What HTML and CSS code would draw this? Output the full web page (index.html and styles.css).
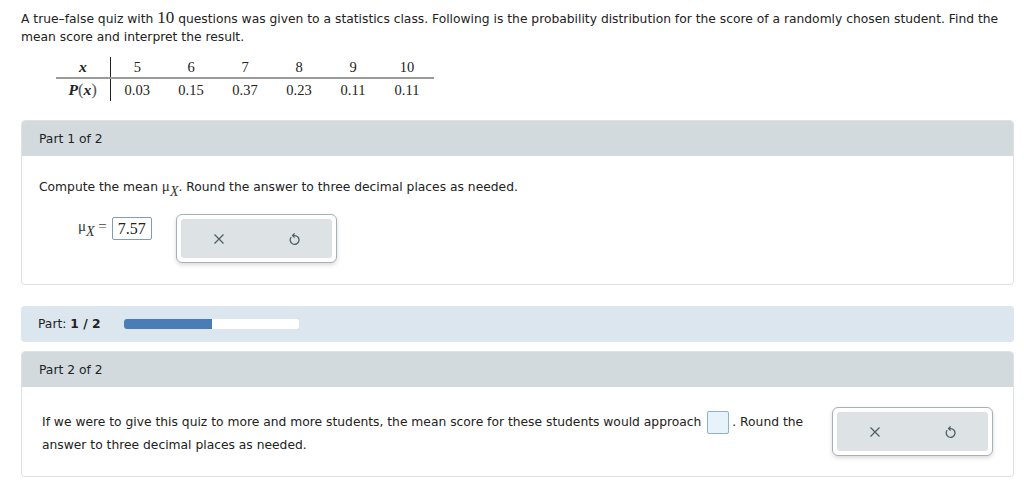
FILE: index.html
```html
<!DOCTYPE html>
<html>
<head>
<meta charset="utf-8">
<link rel="stylesheet" href="styles.css">
</head>
<body>
<div class="page">
  <p class="intro">A true–false quiz with <span class="num">10</span> questions was given to a statistics class. Following is the probability distribution for the score of a randomly chosen student. Find the mean score and interpret the result.</p>

  <table class="dist">
    <tr class="r1">
      <th class="lbl"><i>x</i></th>
      <td>5</td><td>6</td><td>7</td><td>8</td><td>9</td><td>10</td>
    </tr>
    <tr class="r2">
      <th class="lbl"><i>P</i><span class="paren">(</span><i>x</i><span class="paren">)</span></th>
      <td>0.03</td><td>0.15</td><td>0.37</td><td>0.23</td><td>0.11</td><td>0.11</td>
    </tr>
  </table>

  <section class="panel">
    <div class="panel-head">Part 1 of 2</div>
    <div class="panel-body body1">
      <p class="prompt">Compute the mean <span class="mu">μ<sub>X</sub></span>. Round the answer to three decimal places as needed.</p>
      <div class="answer-row">
        <span class="math"><span class="mu">μ<sub>X</sub></span> = </span>
        <span class="input filled">7.57</span>
        <div class="btn-group">
          <div class="btn-inner">
            <span class="icon"><svg width="12" height="12" viewBox="0 0 12 12"><path d="M1.5 1.5 L10.5 10.5 M10.5 1.5 L1.5 10.5" stroke="#4f5f69" stroke-width="1.3" fill="none"/></svg></span>
            <span class="icon"><svg width="12" height="14" viewBox="0 0 12 14"><path d="M3.2 5.2 A4.4 4.4 0 1 0 6.2 3.6 H4.8" stroke="#4f5f69" stroke-width="1.3" fill="none"/><path d="M6.6 1.4 L4.6 3.6 L6.6 5.6" stroke="#4f5f69" stroke-width="1.3" fill="none"/></svg></span>
          </div>
        </div>
      </div>
    </div>
  </section>

  <div class="progress">
    <span class="plabel">Part: <b>1 / 2</b></span>
    <div class="bar"><div class="fill" style="width:50%"></div></div>
  </div>

  <section class="panel">
    <div class="panel-head">Part 2 of 2</div>
    <div class="panel-body body2">
      <p class="prompt2">If we were to give this quiz to more and more students, the mean score for these students would approach <span class="input empty"></span>. Round the answer to three decimal places as needed.</p>
      <div class="btn-group">
        <div class="btn-inner">
          <span class="icon"><svg width="12" height="12" viewBox="0 0 12 12"><path d="M1.5 1.5 L10.5 10.5 M10.5 1.5 L1.5 10.5" stroke="#4f5f69" stroke-width="1.3" fill="none"/></svg></span>
          <span class="icon"><svg width="12" height="14" viewBox="0 0 12 14"><path d="M3.2 5.2 A4.4 4.4 0 1 0 6.2 3.6 H4.8" stroke="#4f5f69" stroke-width="1.3" fill="none"/><path d="M6.6 1.4 L4.6 3.6 L6.6 5.6" stroke="#4f5f69" stroke-width="1.3" fill="none"/></svg></span>
        </div>
      </div>
    </div>
  </section>
</div>
</body>
</html>
```

FILE: styles.css
```css
* { box-sizing: border-box; }
html, body { margin: 0; padding: 0; background: #fff; }
body {
  font-family: "DejaVu Sans", Verdana, sans-serif;
  font-size: 12.3px;
  color: #222;
}
.page {
  padding: 10px 10px 0 21px;
}
.intro {
  margin: 0;
  line-height: 18px;
}
.num {
  font-family: "Liberation Serif", "Times New Roman", serif;
  font-size: 17px;
  line-height: 0;
}
.dist {
  border-collapse: collapse;
  margin: 11px 0 0 35px;
  font-family: "Liberation Serif", "Times New Roman", serif;
  font-size: 14.5px;
  color: #222;
}
.dist th, .dist td {
  width: 54px;
  text-align: center;
  padding: 0;
  font-weight: normal;
}
.dist .lbl {
  border-right: 1.5px solid #222;
  font-weight: bold;
  font-size: 15.5px;
}
.dist .lbl i { font-weight: bold; }
.dist .paren { font-weight: normal; color: #555; font-size: 17px; }
.dist .r1 th, .dist .r1 td {
  height: 21px;
  border-bottom: 2px solid #9a9a9a;
}
.dist .r2 th, .dist .r2 td {
  height: 23px;
}
.panel {
  border: 1px solid #dfe2e4;
  border-radius: 4px;
  overflow: hidden;
  background: #fff;
}
.dist + .panel { margin-top: 19px; }
.panel-head {
  background: #d3dadd;
  height: 35px;
  padding: 0 17px;
  display: flex;
  align-items: center;
}
.body1 {
  padding: 21px 17px 20px;
  height: 128px;
}
.prompt { margin: 0; line-height: 18px; }
.mu {
  font-family: "Liberation Serif", "Times New Roman", serif;
  font-size: 15px;
  color: #333;
}
.mu sub {
  font-style: italic;
  font-size: 14px;
  vertical-align: -5px;
  line-height: 0;
}
.answer-row {
  display: flex;
  align-items: flex-start;
  margin: 18px 0 0 39px;
}
.math {
  font-family: "Liberation Serif", "Times New Roman", serif;
  font-size: 15px;
  color: #444;
  margin-top: 4px;
  margin-right: 5px;
}
.input {
  display: inline-block;
  border: 1px solid #7f9fb0;
  border-radius: 2px;
  background: #fff;
}
.input.filled {
  font-family: "Liberation Serif", "Times New Roman", serif;
  font-size: 16px;
  padding: 1px 5px 2px;
  height: 23px;
  line-height: 19px;
  margin-top: 3px;
}
.input.empty {
  width: 22px;
  height: 23px;
  vertical-align: middle;
  background: #e6f3fb;
  border-color: #8db3c8;
  margin: 0 3px 0 2px;
}
.btn-group {
  width: 161px;
  height: 49px;
  border: 1px solid #a7b0b5;
  border-radius: 6px;
  padding: 4px;
  background: #fff;
  box-shadow: 0 2px 4px rgba(0,0,0,0.15);
  flex: none;
}
.answer-row .btn-group { margin-left: 24px; }
.btn-inner {
  background: #dde2e5;
  border-radius: 3px;
  height: 100%;
  display: flex;
  align-items: center;
  justify-content: center;
  gap: 63px;
}
.icon { display: flex; align-items: center; }
.progress {
  margin-top: 21px;
  height: 36px;
  background: #dce6ef;
  border-radius: 4px;
  display: flex;
  align-items: center;
  padding: 0 17px;
}
.plabel { width: 86px; }
.bar {
  width: 175px;
  height: 10px;
  background: #fff;
  border-radius: 3px;
  overflow: hidden;
}
.fill { height: 100%; background: #4a7db5; }
.progress + .panel { margin-top: 9px; }
.body2 {
  display: flex;
  align-items: flex-start;
  padding: 20px 20px 20px 20px;
  height: 89px;
}
.prompt2 {
  margin: 4px 0 0;
  width: 772px;
  line-height: 22px;
}
.body2 .btn-group { margin-left: 20px; }
```
